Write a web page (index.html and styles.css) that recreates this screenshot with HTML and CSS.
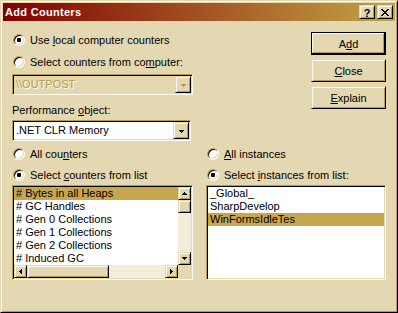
FILE: index.html
```html
<!DOCTYPE html>
<html>
<head>
<meta charset="utf-8">
<link rel="stylesheet" href="styles.css">
</head>
<body>
<div class="window">
  <div class="titlebar">
    <span class="title">Add Counters</span>
    <div class="cap-btn raised"><span class="help-glyph">?</span></div>
    <div class="cap-btn raised">
      <svg width="8" height="7" viewBox="0 0 8 7"><path d="M0 0h2v1H0zM6 0h2v1H6zM1 1h2v1H1zM5 1h2v1H5zM2 2h4v1H2zM3 3h2v1H3zM2 4h4v1H2zM1 5h2v1H1zM5 5h2v1H5zM0 6h2v1H0zM6 6h2v1H6z" fill="#000"/></svg>
    </div>
  </div>
  <div class="client">
    <div class="top">
      <div class="col-left">
        <div class="radio-row"><span class="radio checked"></span><span>Use <u>l</u>ocal computer counters</span></div>
        <div class="radio-row gap6"><span class="radio"></span><span>Select counters from co<u>m</u>puter:</span></div>
        <div class="combo disabled combo-first">
          <span class="combo-text">\\OUTPOST</span>
          <span class="combo-btn raised"><svg width="5" height="3" viewBox="0 0 5 3"><path d="M0 0h5v1H0zM1 1h3v1H1zM2 2h1v1H2z" class="arrow-dis"/></svg></span>
        </div>
        <div class="label">Performance <u>o</u>bject:</div>
        <div class="combo combo-active">
          <span class="combo-text">.NET CLR Memory</span>
          <span class="combo-btn raised"><svg width="5" height="3" viewBox="0 0 5 3"><path d="M0 0h5v1H0zM1 1h3v1H1zM2 2h1v1H2z" fill="#000"/></svg></span>
        </div>
      </div>
      <div class="buttons">
        <div class="btn default">A<u>d</u>d</div>
        <div class="btn raised"><u>C</u>lose</div>
        <div class="btn raised"><u>E</u>xplain</div>
      </div>
    </div>
    <div class="bottom">
      <div class="col-left">
        <div class="radio-row"><span class="radio"></span><span>All cou<u>n</u>ters</span></div>
        <div class="radio-row gap5"><span class="radio checked"></span><span>Select <u>c</u>ounters from list</span></div>
        <div class="listbox with-scroll">
          <div class="items">
            <div class="item sel"># Bytes in all Heaps</div>
            <div class="item"># GC Handles</div>
            <div class="item"># Gen 0 Collections</div>
            <div class="item"># Gen 1 Collections</div>
            <div class="item"># Gen 2 Collections</div>
            <div class="item"># Induced GC</div>
          </div>
          <div class="vscroll">
            <div class="sbtn raised"><svg width="5" height="3" viewBox="0 0 5 3"><path d="M2 0h1v1H2zM1 1h3v1H1zM0 2h5v1H0z" fill="#000"/></svg></div>
            <div class="vthumb raised"></div>
            <div class="track"></div>
            <div class="sbtn raised"><svg width="5" height="3" viewBox="0 0 5 3"><path d="M0 0h5v1H0zM1 1h3v1H1zM2 2h1v1H2z" fill="#000"/></svg></div>
          </div>
          <div class="hscroll">
            <div class="sbtn raised"><svg width="3" height="5" viewBox="0 0 3 5"><path d="M2 0h1v5H2zM1 1h1v3H1zM0 2h1v1H0z" fill="#000"/></svg></div>
            <div class="hthumb raised"></div>
            <div class="track"></div>
            <div class="sbtn raised"><svg width="3" height="5" viewBox="0 0 3 5"><path d="M0 0h1v5H0zM1 1h1v3H1zM2 2h1v1H2z" fill="#000"/></svg></div>
          </div>
          <div class="corner"></div>
        </div>
      </div>
      <div class="col-right">
        <div class="radio-row"><span class="radio"></span><span><u>A</u>ll instances</span></div>
        <div class="radio-row gap5"><span class="radio checked"></span><span>Select <u>i</u>nstances from list:</span></div>
        <div class="listbox plain">
          <div class="item">_Global_</div>
          <div class="item">SharpDevelop</div>
          <div class="item sel">WinFormsIdleTes</div>
        </div>
      </div>
    </div>
  </div>
</div>
</body>
</html>
```

FILE: styles.css
```css
:root {
  --face: #e4d8b2;
  --shadow: #b89a4c;
  --hl: #c8a64f;
  --light: #fffbf0;
}
body {
  margin: 0;
  font-family: "Liberation Sans", Arial, sans-serif;
  font-size: 11px;
  color: #000;
}
u { text-decoration: underline; text-underline-offset: 1px; }

.window {
  width: 398px;
  height: 313px;
  box-sizing: border-box;
  background: var(--face);
  border: 1px solid;
  border-color: var(--face) #000 #000 var(--face);
  box-shadow: inset 1px 1px 0 var(--light), inset -1px -1px 0 var(--shadow);
  padding: 2px;
  display: flex;
  flex-direction: column;
}

.raised {
  box-sizing: border-box;
  background: var(--face);
  border: 1px solid;
  border-color: var(--face) #000 #000 var(--face);
  box-shadow: inset 1px 1px 0 var(--light), inset -1px -1px 0 var(--shadow);
}

.titlebar {
  height: 18px;
  flex: none;
  margin-bottom: 1px;
  background: linear-gradient(to right, #800000, #c4a444);
  display: flex;
  align-items: center;
  padding: 0 2px;
}
.title {
  flex: 1;
  color: #fff;
  font-weight: bold;
  font-size: 11px;
  letter-spacing: 0.3px;
  white-space: nowrap;
}
.cap-btn {
  width: 16px;
  height: 14px;
  margin-left: 2px;
  display: flex;
  align-items: center;
  justify-content: center;
}
.help-glyph {
  font-weight: bold;
  font-size: 11px;
  line-height: 10px;
  margin-top: 1px;
}

.client {
  flex: 1;
  padding: 10px 0 0 9px;
}
.top { display: flex; }
.col-left {
  width: 181px;
  display: flex;
  flex-direction: column;
}
.col-right {
  width: 180px;
  margin-left: 13px;
  display: flex;
  flex-direction: column;
}
.buttons {
  margin-left: auto;
  margin-right: 9px;
  display: flex;
  flex-direction: column;
  gap: 4px;
}
.btn {
  width: 75px;
  height: 23px;
  box-sizing: border-box;
  display: flex;
  align-items: center;
  justify-content: center;
}
.btn.default {
  background: var(--face);
  border: 1px solid #000;
  box-shadow: inset -1px -1px 0 #000, inset 1px 1px 0 var(--light), inset -2px -2px 0 var(--shadow);
}

.radio-row {
  height: 16px;
  display: flex;
  align-items: center;
  gap: 5px;
  padding-left: 1px;
  white-space: nowrap;
}
.gap6 { margin-top: 6px; }
.gap5 { margin-top: 5px; }
.radio {
  width: 12px;
  height: 12px;
  box-sizing: border-box;
  flex: none;
  border-radius: 50%;
  background: #fff;
  border: 1px solid;
  border-color: var(--shadow) var(--light) var(--light) var(--shadow);
  box-shadow: inset 1px 1px 0 #000, inset -1px -1px 0 var(--face);
  display: flex;
  align-items: center;
  justify-content: center;
}
.radio.checked::after {
  content: "";
  width: 4px;
  height: 4px;
  border-radius: 1px;
  background: #000;
}

.combo {
  height: 21px;
  box-sizing: border-box;
  background: #fff;
  border: 1px solid;
  border-color: var(--shadow) var(--light) var(--light) var(--shadow);
  box-shadow: inset 1px 1px 0 #000, inset -1px -1px 0 var(--face);
  padding: 1px;
  display: flex;
}
.combo-first { margin-top: 4px; width: 181px; }
.combo-active { margin-top: 2px; width: 179px; }
.combo.disabled { background: var(--face); }
.combo-text {
  flex: 1;
  padding-left: 2px;
  line-height: 17px;
  white-space: nowrap;
}
.combo.disabled .combo-text {
  color: var(--shadow);
  text-shadow: 1px 1px 0 var(--light);
}
.combo-btn {
  width: 16px;
  height: 17px;
  display: flex;
  align-items: center;
  justify-content: center;
  padding-top: 1px;
}
.arrow-dis { fill: var(--shadow); }
.label {
  margin-top: 7px;
  height: 16px;
  line-height: 16px;
}

.bottom {
  display: flex;
  margin-top: 5px;
}

.listbox {
  margin-top: 2px;
  height: 95px;
  box-sizing: border-box;
  background: #fff;
  border: 1px solid;
  border-color: var(--shadow) var(--light) var(--light) var(--shadow);
  box-shadow: inset 1px 1px 0 #000, inset -1px -1px 0 var(--face);
  padding: 1px;
}
.with-scroll {
  width: 181px;
  display: grid;
  grid-template-columns: 1fr 13px;
  grid-template-rows: 78px 13px;
}
.plain { width: 180px; }
.items { overflow: hidden; }
.item {
  height: 13px;
  line-height: 13px;
  padding-left: 2px;
  white-space: nowrap;
  overflow: hidden;
}
.item.sel { background: var(--hl); }

.vscroll {
  display: flex;
  flex-direction: column;
}
.hscroll {
  display: flex;
}
.sbtn {
  width: 13px;
  height: 13px;
  flex: none;
  display: flex;
  align-items: center;
  justify-content: center;
}
.vthumb { height: 13px; flex: none; }
.hthumb { width: 82px; flex: none; }
.track {
  flex: 1;
  background: #f2ecda;
}
.corner { background: var(--face); }
```
